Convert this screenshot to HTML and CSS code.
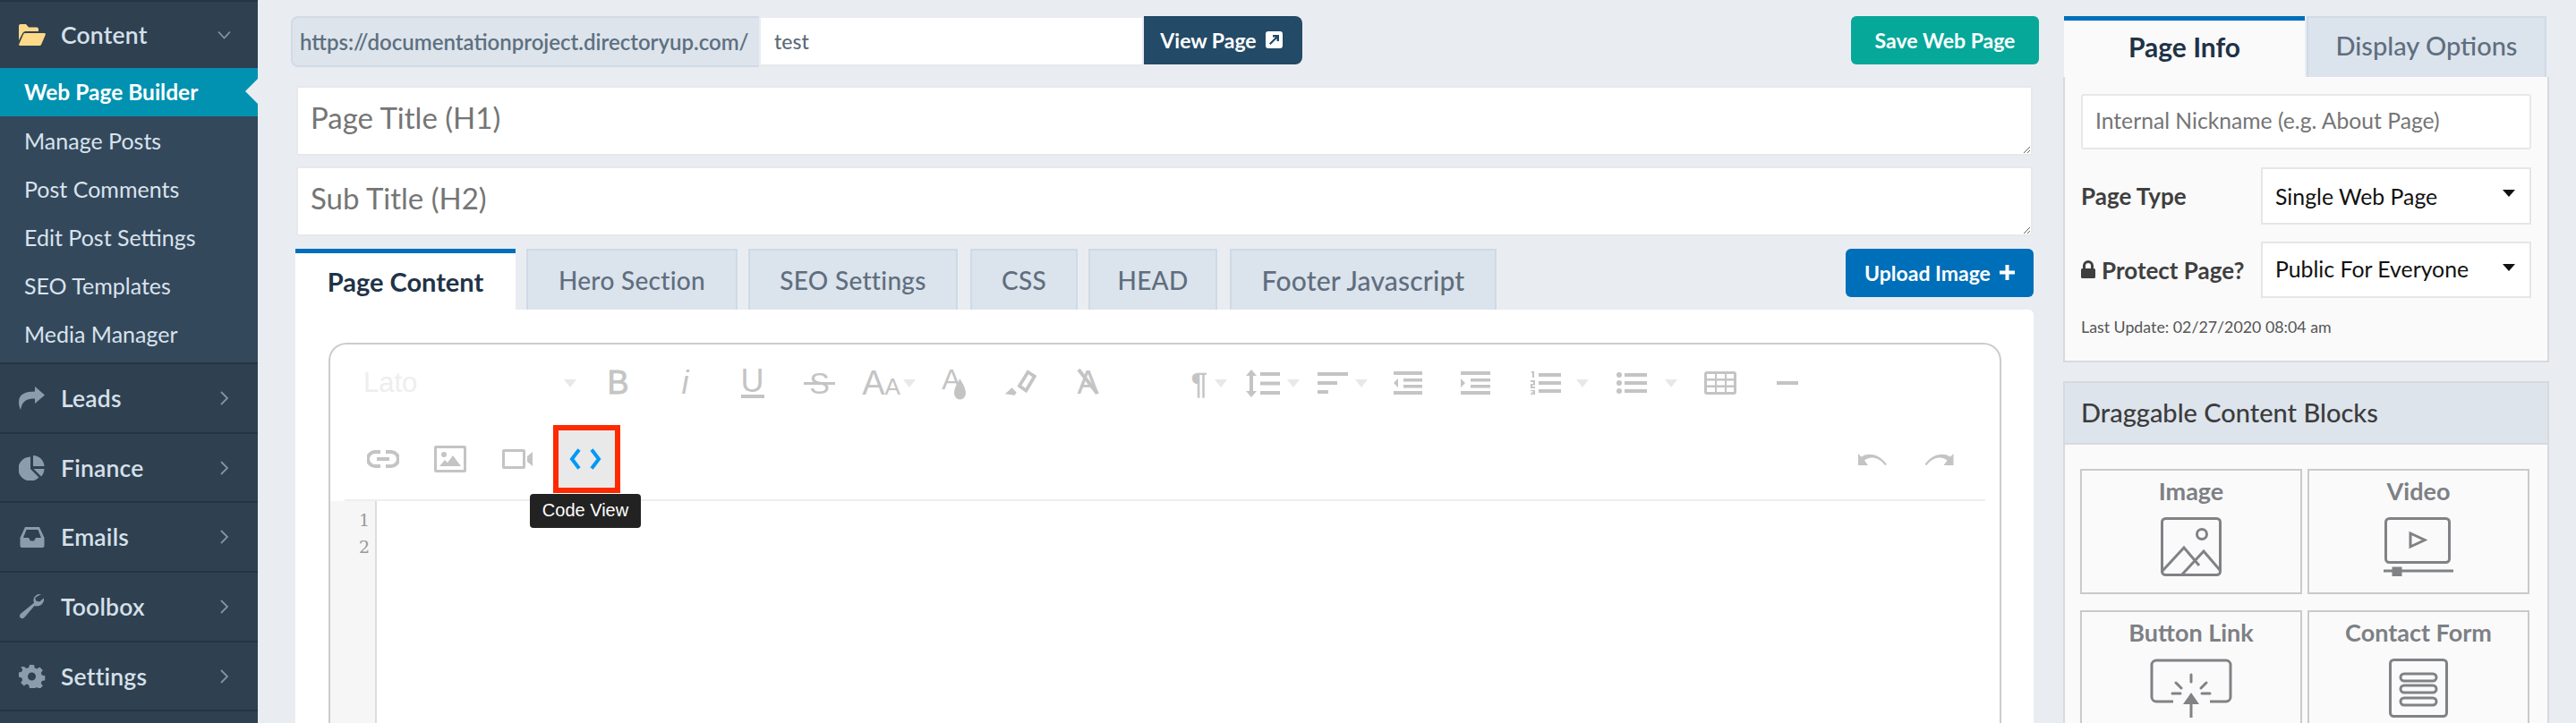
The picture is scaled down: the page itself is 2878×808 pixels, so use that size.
FILE: index.html
```html
<!DOCTYPE html>
<html lang="en">
<head>
<meta charset="utf-8">
<title>Web Page Builder</title>
<link rel="stylesheet" href="styles.css">
</head>
<body>
<div class="page">
  <nav class="sidebar">
    <a class="nav-head">
      <svg class="nav-icon" width="30" height="26" viewBox="0 0 30 26"><path fill="#ffd98a" d="M0 3a2 2 0 0 1 2-2h6l3 3.500h9a2 2 0 0 1 2 2V9H7.500a3.500 3.500 0 0 0-3 1.700L0 19z"/><path fill="#ffd98a" d="M7 11h21.500c1 0 1.700 1 1.200 2L25 24a2 2 0 0 1-1.800 1H1.500C.5 25-.1 24 .4 23L5.300 12A2 2 0 0 1 7 11z"/></svg>
      <span class="nav-label">Content</span>
      <svg class="nav-chevron" width="15" height="10" viewBox="0 0 15 10"><path d="M1 1.500l6.500 7 6.500-7" fill="none" stroke="#8194a5" stroke-width="1.800"/></svg>
    </a>
    <ul class="sub-nav">
      <li class="sub-item active">Web Page Builder</li>
      <li class="sub-item">Manage Posts</li>
      <li class="sub-item">Post Comments</li>
      <li class="sub-item">Edit Post Settings</li>
      <li class="sub-item">SEO Templates</li>
      <li class="sub-item">Media Manager</li>
    </ul>
    <a class="nav-head">
      <svg class="nav-icon" width="30" height="26" viewBox="0 0 30 26"><path fill="#8b9daa" d="M18 0l11 9.500L18 19v-5.500C9 13.500 4 15.500 2 26 .5 23 0 20 0 17 0 8 8 5.500 18 5.500z"/></svg>
      <span class="nav-label">Leads</span>
      <svg class="nav-chevron" width="15" height="16" viewBox="0 0 15 16"><path d="M4 1l7 7-7 7" fill="none" stroke="#8194a5" stroke-width="1.800"/></svg>
    </a>
    <a class="nav-head">
      <svg class="nav-icon" width="30" height="28" viewBox="0 0 30 28"><path fill="#8b9daa" d="M13 1.500V15l9.500 9.500A13.500 13.500 0 1 1 13 1.500z"/><path fill="#8b9daa" d="M16 0a13 13 0 0 1 12.500 12H16z"/><path fill="#8b9daa" d="M16.500 15H28.500a13 13 0 0 1-3.500 8.500z"/></svg>
      <span class="nav-label">Finance</span>
      <svg class="nav-chevron" width="15" height="16" viewBox="0 0 15 16"><path d="M4 1l7 7-7 7" fill="none" stroke="#8194a5" stroke-width="1.800"/></svg>
    </a>
    <a class="nav-head">
      <svg class="nav-icon" width="30" height="24" viewBox="0 0 30 24"><path fill="#8b9daa" fill-rule="evenodd" d="M7 1h16l5.500 12v9a2 2 0 0 1-2 2h-23a2 2 0 0 1-2-2v-9zM8.500 4L5 13h6l2 3.500h4l2-3.500h6L21.500 4z"/></svg>
      <span class="nav-label">Emails</span>
      <svg class="nav-chevron" width="15" height="16" viewBox="0 0 15 16"><path d="M4 1l7 7-7 7" fill="none" stroke="#8194a5" stroke-width="1.800"/></svg>
    </a>
    <a class="nav-head">
      <svg class="nav-icon" width="30" height="28" viewBox="0 0 30 28"><path fill="#8b9daa" d="M25 0c-5-.5-8.500 2.500-8.500 7 0 1 .2 2 .5 2.800L2.500 21.500c-1.800 1.500-2 3.500-.8 4.800 1.200 1.300 3.200 1.200 4.600-.4L17.500 13c4.500 1.500 9.500-1 10.500-6 .2-1 0-2-.3-2.500l-4.500 4-4-1-1-3.500z"/></svg>
      <span class="nav-label">Toolbox</span>
      <svg class="nav-chevron" width="15" height="16" viewBox="0 0 15 16"><path d="M4 1l7 7-7 7" fill="none" stroke="#8194a5" stroke-width="1.800"/></svg>
    </a>
    <a class="nav-head">
      <svg class="nav-icon" width="30" height="26" viewBox="0 0 30 26"><path fill="#8b9daa" fill-rule="evenodd" d="M12 0h5l.8 3.500 2.500 1 3-2 3.500 3.500-2 3 1 2.500 3.500.8v5l-3.500.8-1 2.500 2 3-3.500 3.500-3-2-2.500 1L17 26h-5l-.8-3.500-2.500-1-3 2L2.200 20l2-3-1-2.500L0 13.500v-5l3.200-.8 1-2.500-2-3L5.700 2l3 2 2.500-1zM14.500 8.500a4.500 4.500 0 1 0 0 9 4.500 4.500 0 0 0 0-9z"/></svg>
      <span class="nav-label">Settings</span>
      <svg class="nav-chevron" width="15" height="16" viewBox="0 0 15 16"><path d="M4 1l7 7-7 7" fill="none" stroke="#8194a5" stroke-width="1.800"/></svg>
    </a>
  </nav>

  <main class="main">
    <div class="url-row">
      <div class="url-group">
        <span class="url-addon">https://documentationproject.directoryup.com/</span>
        <input class="url-input" type="text" value="test">
        <a class="btn btn-navy">View Page
          <svg width="19" height="19" viewBox="0 0 19 19"><path fill="#fff" fill-rule="evenodd" d="M3 0h13a3 3 0 0 1 3 3v13a3 3 0 0 1-3 3H3a3 3 0 0 1-3-3V3a3 3 0 0 1 3-3zm5 4v2.500h3L4 13.500 5.500 15l7-7v3H15V4z"/></svg>
        </a>
      </div>
      <a class="btn btn-teal">Save Web Page</a>
    </div>

    <textarea class="title-field" placeholder="Page Title (H1)"></textarea>
    <textarea class="title-field" placeholder="Sub Title (H2)"></textarea>

    <div class="tab-row">
      <div class="tabs">
        <a class="tab tab-active">Page Content</a>
        <a class="tab tab-hero">Hero Section</a>
        <a class="tab tab-seo">SEO Settings</a>
        <a class="tab tab-css">CSS</a>
        <a class="tab tab-head">HEAD</a>
        <a class="tab tab-footer">Footer Javascript</a>
      </div>
      <a class="btn btn-blue">Upload Image
        <svg width="17" height="17" viewBox="0 0 17 17"><path fill="#fff" d="M6.500 0h4v6.500H17v4h-6.500V17h-4v-6.500H0v-4h6.500z"/></svg>
      </a>
    </div>

    <section class="content-panel">
      <div class="editor">
        <div class="toolbar">
          <div class="tool-row-a">
            <div class="tool tool-font"><span class="font-name">Lato</span><span class="caret"></span></div>
            <div class="tool"><span class="glyph glyph-b">B</span></div>
            <div class="tool"><span class="glyph glyph-i">i</span></div>
            <div class="tool"><span class="glyph glyph-u">U</span></div>
            <div class="tool"><span class="glyph glyph-s">S</span></div>
            <div class="tool tool-aa"><span class="glyph glyph-aa">A<small>A</small></span><span class="caret"></span></div>
            <div class="tool"><span class="glyph glyph-color">A</span><svg class="drop" width="13" height="24" viewBox="0 0 13 24"><path fill="#c4c4c4" d="M6.500 0C9 5 13 10 13 16.500a6.500 7 0 0 1-13 0C0 10 4 5 6.500 0z"/></svg></div>
            <div class="tool"><svg width="35" height="30" viewBox="0 0 33 28"><path fill="none" stroke="#c4c4c4" stroke-width="3.500" d="M24 2.500l7 4.500-9 15-7-5z"/><path fill="#c4c4c4" d="M7 19l5 5-2 3-10-1.500z"/></svg></div>
            <div class="tool"><span class="glyph glyph-clear">A</span></div>
            <div class="tool-spacer"></div>
            <div class="tool tool-gap"><span class="glyph glyph-para">¶</span><span class="caret"></span></div>
            <div class="tool tool-gap">
              <svg width="38" height="31" viewBox="0 0 38 31"><path fill="#c4c4c4" d="M6 0l6 7H8v17h4l-6 7-6-7h4V7H0z"/><path fill="#c4c4c4" d="M16 3h22v4H16zM16 13.500h22v4H16zM16 24h22v4H16z"/></svg><span class="caret"></span>
            </div>
            <div class="tool tool-gap">
              <svg width="34" height="24" viewBox="0 0 34 24"><path fill="#c4c4c4" d="M0 0h34v4H0zM0 10h22v4H0zM0 20h12v4H0z"/></svg><span class="caret"></span>
            </div>
            <div class="tool"><svg width="32" height="26" viewBox="0 0 32 26"><path fill="#c4c4c4" d="M0 0h32v4H0zM11 8h21v3.500H11zM11 15h21v3.500H11zM0 22h32v4H0zM5 8v10l-5-5z"/></svg></div>
            <div class="tool"><svg width="33" height="26" viewBox="0 0 33 26"><path fill="#c4c4c4" d="M0 0h33v4H0zM11 8h22v3.500H11zM11 15h22v3.500H11zM0 22h33v4H0zM0 8v10l5-5z"/></svg></div>
            <div class="tool tool-gap tool-list-ol">
              <svg width="34" height="26" viewBox="0 0 34 26"><path fill="#c4c4c4" d="M1 0h3v7H2V2H1zM0 10h5v5.500H2V17h3v2H0v-5h3v-2H0zM0 21h5v5H0v-1.500h3v-.7H1v-1H3v-.7H0zM9 2h25v4H9zM9 11h25v4H9zM9 20h25v4H9z"/></svg><span class="caret"></span>
            </div>
            <div class="tool tool-gap tool-list-ul">
              <svg width="34" height="26" viewBox="0 0 34 26"><circle cx="3" cy="4" r="3" fill="#c4c4c4"/><circle cx="3" cy="13" r="3" fill="#c4c4c4"/><circle cx="3" cy="22" r="3" fill="#c4c4c4"/><path fill="#c4c4c4" d="M9 2h25v4H9zM9 11h25v4H9zM9 20h25v4H9z"/></svg><span class="caret"></span>
            </div>
            <div class="tool"><svg width="36" height="26" viewBox="0 0 36 26"><path fill="#c4c4c4" fill-rule="evenodd" d="M3 0h30a3 3 0 0 1 3 3v20a3 3 0 0 1-3 3H3a3 3 0 0 1-3-3V3a3 3 0 0 1 3-3zM3 3v5h9V3zM14 3v5h9V3zM25 3v5h8V3zM3 10.500v5h9v-5zM14 10.500v5h9v-5zM25 10.500v5h8v-5zM3 18v5h9v-5zM14 18v5h9v-5zM25 18v5h8v-5z"/></svg></div>
            <div class="tool"><svg width="24" height="4" viewBox="0 0 24 4"><path fill="#c4c4c4" d="M0 0h24v4H0z"/></svg></div>
          </div>
          <div class="tool-row-b">
            <div class="tool-cluster">
              <div class="tool tool-b"><svg width="36" height="20" viewBox="0 0 36 20"><path fill="none" stroke="#c4c4c4" stroke-width="4" d="M15 2H9a8 8 0 0 0 0 16h6M21 2h6a8 8 0 0 1 0 16h-6M11 10h14"/></svg></div>
              <div class="tool tool-b"><svg width="36" height="30" viewBox="0 0 36 30"><path fill="#c4c4c4" fill-rule="evenodd" d="M2 0h32a2 2 0 0 1 2 2v26a2 2 0 0 1-2 2H2a2 2 0 0 1-2-2V2a2 2 0 0 1 2-2zM3 3v24h30V3z"/><circle cx="11" cy="10" r="3" fill="#c4c4c4"/><path fill="#c4c4c4" d="M6 23l6-7 3 3 6-8 9 12z"/></svg></div>
              <div class="tool tool-b"><svg width="34" height="22" viewBox="0 0 34 22"><path fill="#c4c4c4" fill-rule="evenodd" d="M2 0h22a2 2 0 0 1 2 2v18a2 2 0 0 1-2 2H2a2 2 0 0 1-2-2V2a2 2 0 0 1 2-2zM3 3v16h20V3z"/><path fill="#c4c4c4" d="M28 8l6-5v16l-6-5z"/></svg></div>
              <div class="tool tool-code">
                <svg width="36" height="24" viewBox="0 0 36 24"><path fill="none" stroke="#0098f7" stroke-width="4" d="M11 1.500L3 12l8 10.500M25 1.500L33 12l-8 10.500"/></svg>
                <span class="tooltip">Code View</span>
              </div>
            </div>
            <div class="tool-cluster">
              <div class="tool tool-b"><svg width="32" height="13" viewBox="0 0 32 13"><path fill="#c4c4c4" d="M0 0l3.500 3.500C10 -1 23 -1 32 12l-2 1C22 3 13 3 7 7.500L11 13H0z"/></svg></div>
              <div class="tool tool-b"><svg width="33" height="13" viewBox="0 0 32 13"><path fill="#c4c4c4" d="M32 0l-3.500 3.500C22 -1 9 -1 0 12l2 1C10 3 19 3 25 7.500L21 13h11z"/></svg></div>
            </div>
          </div>
        </div>
        <div class="code-area">
          <div class="gutter"><span>1</span><span>2</span></div>
          <div class="code-lines"></div>
        </div>
      </div>
    </section>
  </main>

  <aside class="side">
    <div class="side-tabs">
      <a class="side-tab side-tab-active">Page Info</a>
      <a class="side-tab">Display Options</a>
    </div>
    <div class="info-panel">
      <input class="nick-input" type="text" placeholder="Internal Nickname (e.g. About Page)">
      <div class="form-row">
        <label class="form-label">Page Type</label>
        <div class="select-wrap"><select class="select"><option>Single Web Page</option></select></div>
      </div>
      <div class="form-row form-row-b">
        <label class="form-label"><svg class="lock" width="16" height="20" viewBox="0 0 16 20"><path fill="#3f3f3f" fill-rule="evenodd" d="M8 0a6 6 0 0 1 6 6v3h.500A1.500 1.500 0 0 1 16 10.500v8a1.500 1.500 0 0 1-1.500 1.500h-13A1.500 1.500 0 0 1 0 18.500v-8A1.500 1.500 0 0 1 1.500 9H2V6a6 6 0 0 1 6-6zm0 3a3 3 0 0 0-3 3v3h6V6a3 3 0 0 0-3-3z"/></svg>Protect Page?</label>
        <div class="select-wrap select-wrap-b"><select class="select"><option>Public For Everyone</option></select></div>
      </div>
      <p class="updated">Last Update: 02/27/2020 08:04 am</p>
    </div>

    <div class="blocks">
      <h3 class="blocks-head">Draggable Content Blocks</h3>
      <div class="blocks-grid">
        <div class="block">
          <span class="block-label">Image</span>
          <svg width="68" height="66" viewBox="0 0 68 66" fill="none" stroke="#808285" stroke-width="3"><rect x="1.500" y="1.500" width="65" height="63" rx="4"/><circle cx="46" cy="19" r="5.500"/><path d="M2 60l24-26 17 20M23 65l25-27 18 21"/></svg>
        </div>
        <div class="block">
          <span class="block-label">Video</span>
          <svg width="78" height="66" viewBox="0 0 78 66" fill="none" stroke="#808285" stroke-width="3"><rect x="2.500" y="1.500" width="71" height="49" rx="4"/><path d="M30 18v15l16-7.500z"/><path d="M0 60h78"/><rect x="11" y="57" width="8" height="8" fill="#808285"/></svg>
        </div>
        <div class="block">
          <span class="block-label">Button Link</span>
          <svg width="92" height="66" viewBox="0 0 92 66" fill="none" stroke="#808285" stroke-width="3"><path d="M26 48H7a5 5 0 0 1-5-5V7a5 5 0 0 1 5-5h78a5 5 0 0 1 5 5v36a5 5 0 0 1-5 5H67"/><path stroke-linecap="round" d="M46 18v8M29 27l6 6M63 27l-6 6M25 39h9M58 39h9"/><path d="M46 48v18"/><path fill="#808285" stroke="none" d="M46 38l9 13H37z"/></svg>
        </div>
        <div class="block">
          <span class="block-label">Contact Form</span>
          <svg width="66" height="66" viewBox="0 0 66 66" fill="none" stroke="#808285" stroke-width="3"><rect x="1.500" y="1.500" width="63" height="63" rx="4"/><rect x="13" y="17" width="40" height="8" rx="4"/><rect x="13" y="30" width="40" height="8" rx="4"/><rect x="13" y="44" width="40" height="8" rx="4"/></svg>
        </div>
      </div>
    </div>
  </aside>
</div>
</body>
</html>
```
FILE: styles.css
```css
* { box-sizing: border-box; }
html, body { margin: 0; height: 808px; overflow: hidden; background: #e9edf2; }
body { font-family: Lato, "Noto Sans", sans-serif; color: #333; }
a { text-decoration: none; }
ul { list-style: none; margin: 0; padding: 0; }
.page { display: grid; grid-template-columns: 288px 2017px 543px; height: 808px; }

/* Sidebar */
.sidebar { background: #2f4050; border-top: 2px solid #263442; height: 808px; overflow: hidden; }
.nav-head { display: flex; align-items: center; height: 77.700px; padding: 0 30px 0 21px; border-bottom: 2px solid #263442; }
.sidebar > .nav-head:first-child { height: 74px; border-bottom: 0; }
.nav-icon { flex: 0 0 30px; }
.nav-label { flex: 1; margin-left: 17px; font-size: 26.500px; font-weight: 600; color: #d5e0ea; letter-spacing: .2px; }
.sub-nav { background: #34485c; padding-bottom: 5px; border-bottom: 2px solid #263442; }
.sub-item { position: relative; height: 54px; line-height: 54px; padding-left: 27px; font-size: 25px; color: #d9e3ec; }
.sub-item.active { background: #0092b0; color: #fff; font-size: 24.500px; font-weight: 700; }
.sub-item.active::after { content: ""; position: absolute; right: 0; top: 12px; border: 14px solid transparent; border-left: 0; border-right-color: #e9edf2; }

/* Main column */
.main { padding: 18px 27px 0 37px; min-width: 0; }
.url-row { display: flex; justify-content: space-between; align-items: flex-start; height: 78px; }
.url-group { display: flex; align-items: flex-start; }
.url-addon { width: 523px; height: 57px; line-height: 54px; padding-left: 8px; background: #dde4ec; border: 2px solid #d0dbe6; border-right: 0; border-radius: 8px 0 0 8px; font-size: 24px; font-weight: 600; color: #5d7080; white-space: nowrap; }
.url-input { width: 426px; height: 54px; margin: 2px 2px 0 2px; padding: 0 15px; border: 0; border-bottom: 2px solid #e6e8ea; background: #fff; font: 500 23px Lato, sans-serif; color: #5b6b7b; outline: 0; }
.btn { display: flex; align-items: center; justify-content: center; height: 54px; padding-bottom: 1px; color: #fff; font-size: 23px; font-weight: 700; border-radius: 6px; gap: 10px; }
.btn-navy { width: 177px; padding-right: 4px; background: #234a66; border-radius: 0 8px 8px 0; }
.btn-teal { width: 210px; background: #06a899; }
.btn-blue { width: 210px; background: #006fb9; }

.title-field { display: block; width: calc(100% - 13px); height: 78px; margin: 0 7px 12px 6px; padding: 10px 14px; border: 2px solid #e6e8ea; border-radius: 3px; background: #fff; font: 33px/1.400 Lato, sans-serif; color: #444; outline: 0; }
.title-field::placeholder { color: #757575; opacity: 1; }
.title-field + .title-field { margin-bottom: 14px; }

.tab-row { display: flex; justify-content: space-between; align-items: flex-start; height: 68px; margin: 0 6px 0 5px; }
.tabs { display: flex; }
.tab { display: flex; align-items: center; justify-content: center; height: 68px; background: #dbe3ec; border: 2px solid #cfdae6; border-bottom: 0; font-size: 28px; color: #5f6e7e; font-weight: 500; letter-spacing: .3px; }
.tab-active { width: 246px; background: #fff; border: 0; border-top: 5px solid #006fb9; color: #1f3347; font-size: 29px; font-weight: 700; letter-spacing: 0; }
.tab-hero { width: 236px; margin-left: 12px; }
.tab-seo { width: 234px; margin-left: 12px; }
.tab-css { width: 120px; margin-left: 14px; }
.tab-head { width: 144px; margin-left: 12px; }
.tab-footer { width: 298px; margin-left: 14px; font-size: 30px; letter-spacing: .2px; }

.content-panel { height: 462px; margin: 0 6px 0 5px; padding: 37px 36px 0 37px; background: #fff; border-radius: 0 6px 0 0; }
.editor { height: 425px; border: 2px solid #ccc; border-bottom: 0; border-radius: 20px 20px 0 0; }
.toolbar { height: 175px; margin: 0 16px; padding-top: 5px; border-bottom: 2px solid #eee; }
.tool-row-a { display: grid; grid-template-columns: 268px repeat(8, 75px) 67px 62px 80px 76px 70px 80px 108px 88px 76px 74px; height: 76px; margin-bottom: 9px; }
.tool { position: relative; display: flex; align-items: center; justify-content: center; color: #c4c4c4; }
.tool-font { justify-content: space-between; padding: 0 9px 0 21px; }
.font-name { font: 31px "Liberation Sans", sans-serif; color: #eee; }
.tool-gap { gap: 8px; }
.tool-aa { gap: 3px; padding-left: 5px; }
.tool-list-ol { gap: 17px; }
.tool-list-ul { gap: 20px; }
.caret { flex: none; width: 0; height: 0; border: 7px solid transparent; border-top: 9px solid #e8e8e8; border-bottom: 0; }
.glyph { font: 36px/1 "Liberation Sans", sans-serif; color: #c4c4c4; }
.glyph-b { -webkit-text-stroke: .8px #c4c4c4; }
.glyph-i { font-style: italic; }
.glyph-u { border-bottom: 4px solid #c4c4c4; line-height: 30px; height: 34px; }
.glyph-s { position: relative; font-size: 34px; }
.glyph-s::after { content: ""; position: absolute; left: -6px; right: -6px; top: 16px; height: 3px; background: #c4c4c4; }
.glyph-aa { font-size: 38px; }
.glyph-aa small { font-size: 26px; }
.glyph-color { margin: -8px -8px 0 0; font-size: 32px; }
.drop { margin-top: 14px; }
.glyph-clear { position: relative; font-size: 36px; }
.glyph-clear::after { content: ""; position: absolute; left: 2px; top: 1px; width: 34px; height: 4px; background: #c4c4c4; transform: rotate(52deg); transform-origin: left center; }
.glyph-para { font-size: 34px; -webkit-text-stroke: .5px #c4c4c4; }
.tool-row-b { display: flex; justify-content: space-between; height: 76px; padding: 0 14px 0 5px; }
.tool-cluster { display: flex; }
.tool-b { width: 75px; }
.tool-code { width: 75px; margin-left: 3px; padding-right: 3px; background: #e9e9e9; border: 6px solid #ff2a00; }
.tooltip { position: absolute; left: -32px; top: 71px; z-index: 2; width: 124px; height: 38px; text-align: center; background: #222; border-radius: 4px; color: #fff; font: 20px/36px "Liberation Sans", sans-serif; }
.code-area { display: flex; height: 248px; }
.gutter { display: flex; flex-direction: column; width: 52px; padding: 6px 6px 0 0; background: #f6f6f6; border-right: 2px solid #ddd; text-align: right; font: 19px/30px "DejaVu Serif", serif; color: #999; }

/* Right column */
.side { padding-top: 18px; }
.side-tabs { display: flex; height: 68px; padding-left: 1px; }
.side-tab { display: flex; align-items: center; justify-content: center; width: 268px; margin-left: 2px; padding-bottom: 5px; background: #dbe3ec; border: 2px solid #cfdae6; border-bottom: 0; font-size: 29px; color: #5f6e7e; font-weight: 500; }
.side-tab-active { width: 269px; margin-left: 0; padding-bottom: 6px; background: #fafafa; border: 0; border-top: 5px solid #006fb9; color: #1f3347; font-size: 30px; font-weight: 700; }
.info-panel { height: 319px; padding: 19px 18px 0 18px; background: #fafafa; border: 2px solid #d7dadd; border-top: 0; }
.nick-input { display: block; width: 503px; height: 62px; padding: 0 14px 3px; border: 2px solid #e8e8e8; border-radius: 3px; background: #fff; font: 24.700px Lato, sans-serif; outline: 0; }
.nick-input::placeholder { color: #757575; opacity: 1; }
.form-row { display: grid; grid-template-columns: 201px 302px; align-items: center; margin-top: 20px; }
.form-row-b { margin-top: 19px; }
.form-label { display: flex; align-items: center; gap: 7px; font-size: 26px; font-weight: 700; color: #3f3f3f; }
.lock { margin-top: -2px; }
.select-wrap { position: relative; }
.select-wrap::after { content: ""; position: absolute; right: 18px; top: 25px; border: 7px solid transparent; border-top: 8px solid #111; border-bottom: 0; }
.select { display: block; width: 302px; height: 64px; padding: 0 14px; appearance: none; border: 2px solid #e6e6e6; border-radius: 0; background: #fff; font: 24.800px Lato, sans-serif; color: #111; outline: 0; }
.select-wrap-b .select { height: 63px; padding-bottom: 3px; }
.updated { margin: 20px 0 0; font-size: 17.800px; line-height: 24px; color: #555; }

.blocks { margin-top: 21px; border: 2px solid #d7dadd; border-bottom: 0; background: #fafafa; }
.blocks-head { height: 69px; margin: 0; padding: 0 18px; background: #dde4ec; border-bottom: 2px solid #d7dadd; font-size: 29px; line-height: 65px; font-weight: 500; color: #3c3c3c; }
.blocks-grid { display: grid; grid-template-columns: 248px 248px; column-gap: 6px; row-gap: 18px; grid-auto-rows: 140px; padding: 27px 17px 0; }
.block { display: flex; flex-direction: column; align-items: center; padding-top: 10px; border: 2px solid #c8cacc; }
.block-label { height: 42px; font-size: 27px; line-height: 26px; font-weight: 700; color: #7d8085; }
```
